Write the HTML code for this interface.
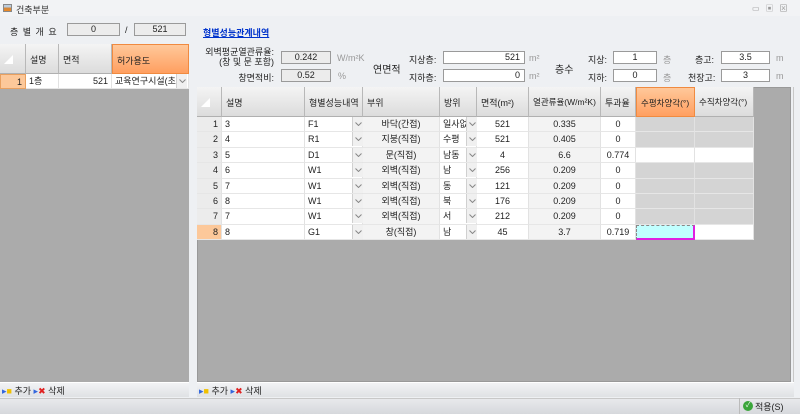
<!DOCTYPE html>
<html><head><meta charset="utf-8"><style>
*{box-sizing:border-box;margin:0;padding:0}
body{width:800px;height:414px;overflow:hidden;background:#eef0f3;font-family:"Liberation Sans","Noto Sans CJK KR",sans-serif;font-size:9px;color:#222;position:relative}
.a{position:absolute;white-space:nowrap}
.box{position:absolute;background:#fff;border:1px solid #9a9a9a;height:13px;font-size:9px;line-height:11px;padding:0 4px}
.gbox{background:#ececec;text-align:center}
.u{color:#999}
.hd{position:absolute;background:linear-gradient(#f4f4f4,#dcdcdc);border-right:1px solid #b8b8b8;border-bottom:1px solid #b0b0b0;font-size:9px;padding:9px 0 0 4px;height:30px}
.or{background:linear-gradient(#ffc89a,#ff9f60);border:1px solid #f08a40}
.c{position:absolute;height:15.4px;line-height:15px;border-right:1px solid #e2e2e2;border-bottom:1px solid #e6e6e6;background:#fff;font-size:9px;padding:0 3px}
.dd{position:absolute;width:11px;height:14px;background:#f0f0f0;border-left:1px solid #d0d0d0}
.dd svg{position:absolute;left:2px;top:5px}
.ri{background:#ececec;text-align:right;padding-right:3px}
</style></head><body>
<div class="a" style="left:0;top:0;width:800px;height:16px;background:#f2f3f5"></div>
<div class="a" style="left:3px;top:4px;width:9px;height:8px;background:linear-gradient(#bcd 0,#bcd 40%,#c84 40%,#e82 100%);border:1px solid #888"></div>
<div class="a" style="left:16px;top:3px;font-size:9px;color:#333">건축부분</div>
<div class="a" style="left:752px;top:3px;font-size:8px;color:#999;letter-spacing:6px">▭▣⊠</div>
<div class="a" style="left:10px;top:25px;font-size:9px;letter-spacing:1px">층 별 개 요</div>
<div class="box gbox" style="left:67px;top:23px;width:53px">0</div>
<div class="a" style="left:125px;top:25px">/</div>
<div class="box gbox" style="left:134px;top:23px;width:52px">521</div>
<div class="a" style="left:203px;top:26px;color:#0033cc;font-weight:bold;text-decoration:underline">형별성능관계내역</div>
<div class="a" style="left:0;top:44px;width:189px;height:338px;background:#ababab"></div>
<div class="hd" style="left:0;top:44px;width:26px;color:#fff">◢</div>
<div class="hd" style="left:26px;top:44px;width:33px">설명</div>
<div class="hd" style="left:59px;top:44px;width:53px">면적</div>
<div class="hd or" style="left:112px;top:44px;width:77px">허가용도</div>
<div class="c" style="left:0;top:74px;width:26px;background:#fcc89a;text-align:right;border:1px solid #e8a060">1</div>
<div class="c" style="left:26px;top:74px;width:33px">1층</div>
<div class="c" style="left:59px;top:74px;width:53px;text-align:right">521</div>
<div class="c" style="left:112px;top:74px;width:77px;overflow:hidden">교육연구시설(초</div>
<div class="dd" style="left:176px;top:74px"><svg width="7" height="4"><path d="M0.5 0.5L3.5 3.5L6.5 0.5" stroke="#888" fill="none"/></svg></div>
<div class="a" style="left:189px;top:20px;width:8px;height:378px;background:#eef0f3"></div>
<div class="a" style="left:190px;top:47px;width:84px;text-align:right;line-height:10px">외벽평균열관류율:<br>(창 및 문 포함)</div>
<div class="box gbox" style="left:281px;top:51px;width:50px">0.242</div>
<div class="a u" style="left:337px;top:53px">W/m²K</div>
<div class="a" style="left:190px;top:71px;width:84px;text-align:right">창면적비:</div>
<div class="box gbox" style="left:281px;top:69px;width:50px">0.52</div>
<div class="a u" style="left:338px;top:71px">%</div>
<div class="a" style="left:373px;top:61px;font-size:10px">연면적</div>
<div class="a" style="left:409px;top:53px">지상층:</div>
<div class="box" style="left:443px;top:51px;width:82px;text-align:right">521</div>
<div class="a u" style="left:529px;top:53px">m²</div>
<div class="a" style="left:409px;top:71px">지하층:</div>
<div class="box" style="left:443px;top:69px;width:82px;text-align:right">0</div>
<div class="a u" style="left:529px;top:71px">m²</div>
<div class="a" style="left:555px;top:61px;font-size:10px">층수</div>
<div class="a" style="left:588px;top:53px">지상:</div>
<div class="box" style="left:613px;top:51px;width:44px;text-align:center">1</div>
<div class="a u" style="left:663px;top:53px">층</div>
<div class="a" style="left:588px;top:71px">지하:</div>
<div class="box" style="left:613px;top:69px;width:44px;text-align:center">0</div>
<div class="a u" style="left:663px;top:71px">층</div>
<div class="a" style="left:695px;top:53px">층고:</div>
<div class="box" style="left:721px;top:51px;width:49px;text-align:center">3.5</div>
<div class="a u" style="left:776px;top:53px">m</div>
<div class="a" style="left:688px;top:71px">천장고:</div>
<div class="box" style="left:721px;top:69px;width:49px;text-align:center">3</div>
<div class="a u" style="left:776px;top:71px">m</div>
<div class="a" style="left:197px;top:87px;width:594px;height:295px;background:#ababab;border:1px solid #999"></div>
<div class="a" style="left:793px;top:87px;width:1px;height:295px;background:#c8c8c8"></div>
<div class="hd" style="left:197px;top:87px;width:25px;color:#fff">◢</div>
<div class="hd" style="left:222px;top:87px;width:83px">설명</div>
<div class="hd" style="left:305px;top:87px;width:58px">형별성능내역</div>
<div class="hd" style="left:363px;top:87px;width:77px">부위</div>
<div class="hd" style="left:440px;top:87px;width:37px">방위</div>
<div class="hd" style="left:477px;top:87px;width:52px">면적(m²)</div>
<div class="hd" style="left:529px;top:87px;width:72px;font-size:8.5px">열관류율(W/m²K)</div>
<div class="hd" style="left:601px;top:87px;width:35px">투과율</div>
<div class="hd or" style="left:636px;top:87px;width:59px;font-size:8.5px">수평차양각(°)</div>
<div class="hd" style="left:695px;top:87px;width:59px;font-size:8.5px">수직차양각(°)</div>
<div id="rows"></div>
<script>
var d=[["3","F1","바닥(간접)","일사없","521","0.335","0",1],["4","R1","지붕(직접)","수평","521","0.405","0",1],["5","D1","문(직접)","남동","4","6.6","0.774",0],["6","W1","외벽(직접)","남","256","0.209","0",1],["7","W1","외벽(직접)","동","121","0.209","0",1],["8","W1","외벽(직접)","북","176","0.209","0",1],["7","W1","외벽(직접)","서","212","0.209","0",1],["8","G1","창(직접)","남","45","3.7","0.719",2]];
var h="",sv='<svg width="7" height="4"><path d="M0.5 0.5L3.5 3.5L6.5 0.5" stroke="#888" fill="none"/></svg>';
d.forEach(function(r,i){var t=117+i*15.4;
var sel=i==7;
h+='<div class="c ri" style="left:197px;top:'+t+'px;width:25px;'+(sel?'background:#fcc89a':'')+'">'+(i+1)+'</div>';
h+='<div class="c" style="left:222px;top:'+t+'px;width:83px">'+r[0]+'</div>';
h+='<div class="c" style="left:305px;top:'+t+'px;width:58px">'+r[1]+'</div><div class="dd" style="left:352px;top:'+t+'px">'+sv+'</div>';
h+='<div class="c" style="left:363px;top:'+t+'px;width:77px;background:#f3f3f3;text-align:center">'+r[2]+'</div>';
h+='<div class="c" style="left:440px;top:'+t+'px;width:37px;overflow:hidden;padding-right:0">'+r[3]+'</div><div class="dd" style="left:466px;top:'+t+'px">'+sv+'</div>';
h+='<div class="c" style="left:477px;top:'+t+'px;width:52px;text-align:center">'+r[4]+'</div>';
h+='<div class="c" style="left:529px;top:'+t+'px;width:72px;background:#f3f3f3;text-align:center">'+r[5]+'</div>';
h+='<div class="c" style="left:601px;top:'+t+'px;width:35px;text-align:center">'+r[6]+'</div>';
var g=r[7]==1?'#d4d4d4':'#fff';
h+='<div class="c" style="left:636px;top:'+t+'px;width:59px;background:'+(r[7]==2?'#c0ffff;border:1px dashed #888;border-bottom:2px solid #e020e0;border-right:2px solid #e020e0':g)+'"></div>';
h+='<div class="c" style="left:695px;top:'+t+'px;width:59px;background:'+g+'"></div>';
});
document.getElementById('rows').innerHTML=h;
</script>
<div class="a" style="left:0;top:382px;width:189px;height:15px;background:linear-gradient(#f2f3f5,#dfe1e4);border-top:1px solid #fff"></div>
<div class="a" style="left:197px;top:382px;width:597px;height:15px;background:linear-gradient(#f2f3f5,#dfe1e4);border-top:1px solid #fff"></div>
<div class="a" style="left:2px;top:384px;font-size:9px"><span style="color:#3366dd">▸</span><span style="color:#f0c000">■</span> 추가 <span style="color:#3366dd">▸</span><span style="color:#e02020">✖</span> 삭제</div>
<div class="a" style="left:199px;top:384px;font-size:9px"><span style="color:#3366dd">▸</span><span style="color:#f0c000">■</span> 추가 <span style="color:#3366dd">▸</span><span style="color:#e02020">✖</span> 삭제</div>
<div class="a" style="left:0;top:398px;width:800px;height:16px;background:linear-gradient(#e8e9ec,#d6d8dc);border-top:1px solid #c8c8c8"></div>
<div class="a" style="left:739px;top:398px;width:1px;height:16px;background:#bbb"></div>
<div class="a" style="left:743px;top:401px;width:10px;height:10px;border-radius:50%;background:#3aa53a;color:#fff;font-size:7px;text-align:center;line-height:10px">✓</div>
<div class="a" style="left:755px;top:400px;font-size:9px">적용(S)</div>
</body></html>
